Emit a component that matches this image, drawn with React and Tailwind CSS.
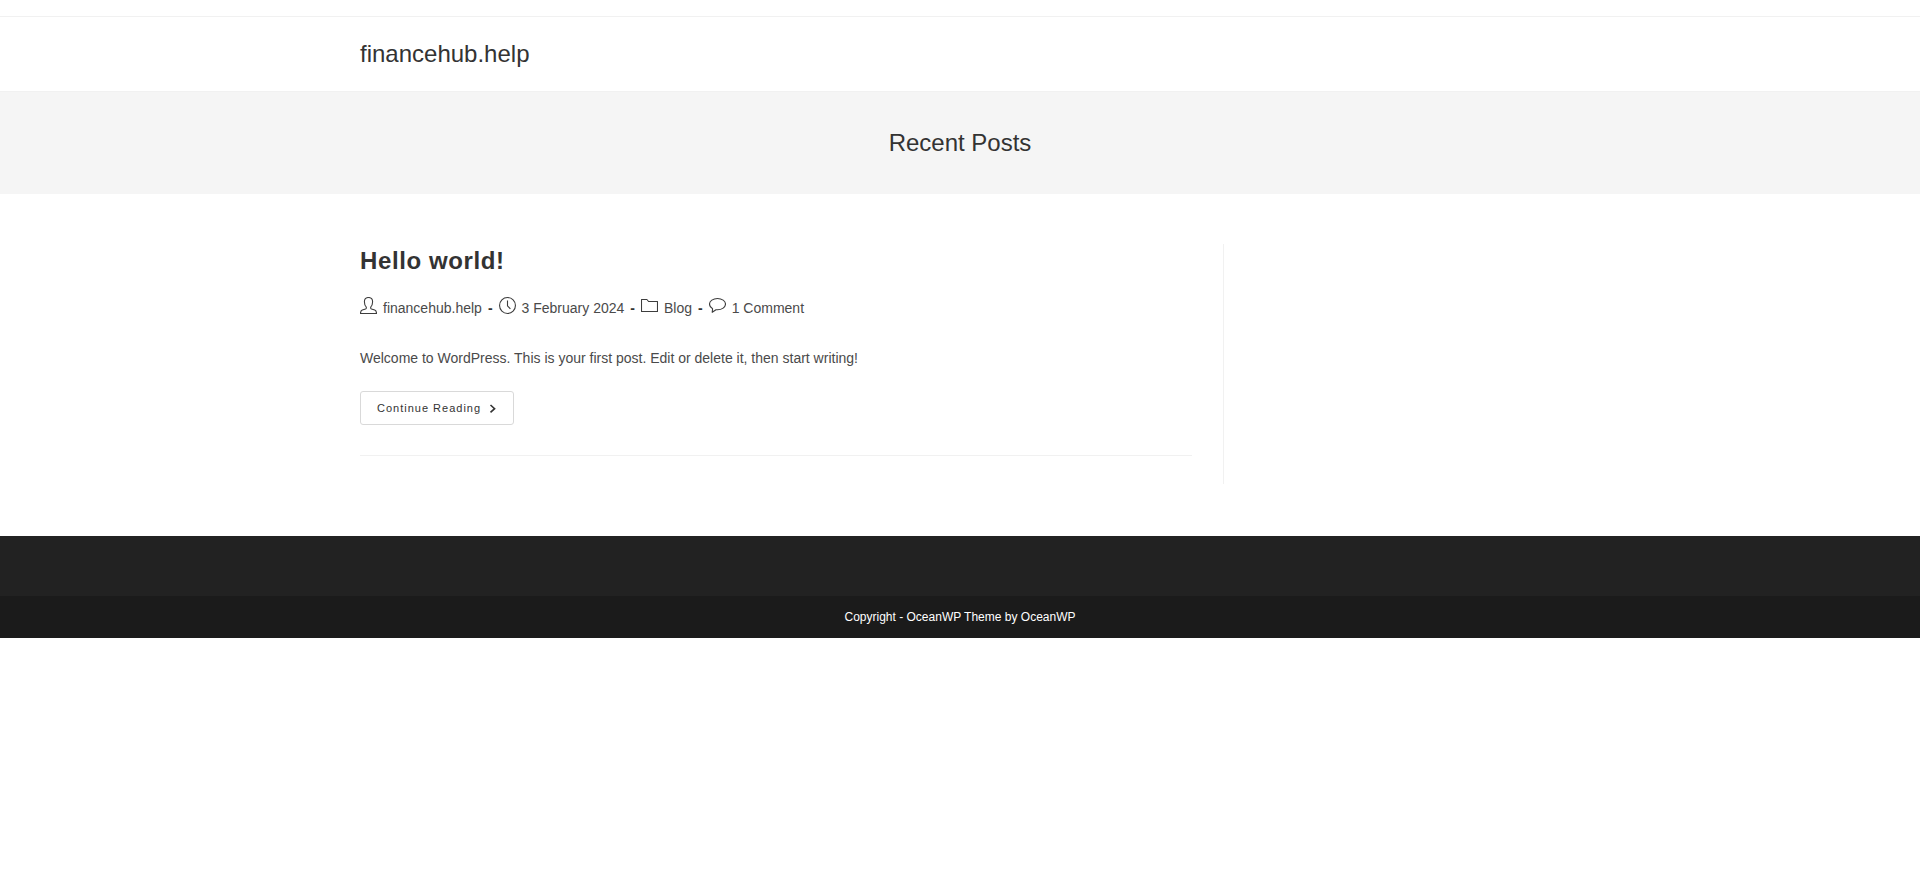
import React from 'react';

function MetaIcon({ children }) {
  return (
    <svg
      aria-hidden="true"
      viewBox="0 0 17 17"
      className="-mt-[6px] size-[17px] shrink-0"
      fill="none"
      stroke="#3d3d3d"
      strokeWidth="1.1"
      strokeLinejoin="round"
    >
      {children}
    </svg>
  );
}

const UserIcon = () => (
  <MetaIcon>
    <path d="M8.500 .5C5.600 .5 4.400 2.300 4.400 4.800c0 2.500.7 4.200 1.900 5.300v.8c0 .6-.3.9-.8 1.100l-3.200 1.100C.9 13.600.5 14.500.5 16.500h16c0-2-.4-2.900-1.800-3.400l-3.200-1.100c-.5-.2-.8-.5-.8-1.100v-.8c1.200-1.100 1.900-2.800 1.900-5.300C12.600 2.300 11.400.5 8.500.5z" />
  </MetaIcon>
);

const ClockIcon = () => (
  <MetaIcon>
    <circle cx="8.500" cy="8.500" r="7.950" />
    <path d="M8.500 3.500v5.300l2.900 3.100" />
  </MetaIcon>
);

const FolderIcon = () => (
  <MetaIcon>
    <path d="M.5 14.500v-12h5.400l1.700 2h8.900v10z" />
  </MetaIcon>
);

const CommentIcon = () => (
  <MetaIcon>
    <path d="M8.500 1.500c4.400 0 8 2.500 8 5.600s-3.600 5.700-8 5.700c-.5 0-1-.1-1.500-.1L3.200 15.300l.4-3.600C1.700 10.700.5 9 .5 7.100c0-3.100 3.600-5.600 8-5.600z" />
  </MetaIcon>
);

const meta = [
  { label: 'financehub.help', Icon: UserIcon, link: true },
  { label: '3 February 2024', Icon: ClockIcon },
  { label: 'Blog', Icon: FolderIcon, link: true },
  { label: '1 Comment', Icon: CommentIcon, link: true },
];

function Container({ className = '', children }) {
  return <div className={`mx-auto w-full max-w-[1200px] ${className}`}>{children}</div>;
}

function Post() {
  return (
    <article className="border-b border-[#f1f1f1] pb-[30px]">
      <h2 className="text-2xl leading-[34px] font-bold tracking-wide text-[#333333]">
        <a href="#post">Hello world!</a>
      </h2>
      <ul className="mt-[18px] flex flex-wrap items-center gap-x-[6px] leading-6">
        {meta.map(({ label, Icon, link }, i) => (
          <li key={label} className="flex items-center gap-[6px]">
            {i > 0 && <span className="font-bold text-[#333333]">-</span>}
            <Icon />
            {link ? <a href="#post">{label}</a> : <span>{label}</span>}
          </li>
        ))}
      </ul>
      <p className="mt-[26px] leading-6">
        Welcome to WordPress. This is your first post. Edit or delete it, then start writing!
      </p>
      <a
        href="#post"
        className="mt-[21px] inline-flex h-[34px] items-center rounded-[3px] border border-[#d9d9d9] px-4 pt-px align-top text-[11px] tracking-[1px] text-[#333333]"
      >
        Continue Reading
        <svg
          aria-hidden="true"
          viewBox="0 0 8 10"
          className="ml-2 h-[10px] w-2"
          fill="none"
          stroke="currentColor"
          strokeWidth="1.600"
        >
          <path d="M1.500 1 5.600 4.700 1.500 8.400" />
        </svg>
      </a>
    </article>
  );
}

export default function App() {
  return (
    <div className="bg-white font-['Liberation_Sans',Arial,sans-serif] text-sm text-[#4a4a4a]">
      <div className="h-[17px] border-b border-[#f1f1f1]" />
      <header className="border-b border-[#f1f1f1]">
        <Container className="flex h-[74px] items-center">
          <a href="#home" className="text-2xl text-[#333333]">financehub.help</a>
        </Container>
      </header>
      <section className="bg-[#f5f5f5] py-[34px]">
        <h1 className="text-center text-2xl leading-[34px] text-[#333333]">Recent Posts</h1>
      </section>
      <main className="pt-[50px] pb-[52px]">
        <Container className="flex">
          <div className="w-[72%] border-r border-[#f1f1f1] pr-[31px] pb-7">
            <Post />
          </div>
          <aside className="flex-1" aria-label="Sidebar" />
        </Container>
      </main>
      <footer>
        <div className="h-[60px] bg-[#222222]" />
        <div className="bg-[#1b1b1b] py-[11px] text-center text-xs leading-5 text-white">
          Copyright - OceanWP Theme by OceanWP
        </div>
      </footer>
    </div>
  );
}
